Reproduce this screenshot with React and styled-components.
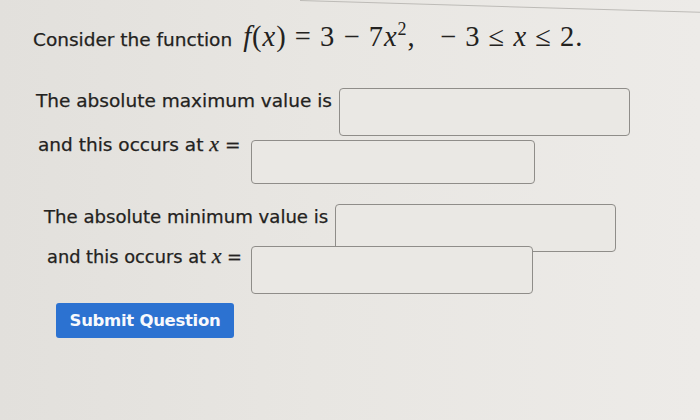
import React from "react";
import styled, { createGlobalStyle } from "styled-components";

const GlobalStyle = createGlobalStyle`
  body {
    margin: 0;
    background: #e7e5e1;
  }
`;

const Page = styled.div`
  width: 700px;
  height: 420px;
  overflow: hidden;
  background: linear-gradient(90deg, #e2e0dc 0%, #e8e6e2 45%, #edebe8 100%);
  font-family: "DejaVu Sans", "Noto Sans", sans-serif;
  color: #232220;
`;

const TopEdge = styled.div`
  margin-left: 300px;
  width: 420px;
  height: 2px;
  border-top: 1.5px solid #bdbbb7;
  transform: rotate(1.7deg);
  transform-origin: left top;
`;

const Title = styled.div`
  display: flex;
  align-items: baseline;
  padding: 16px 0 0 33px;
  font-size: 18.5px;
  white-space: nowrap;
  -webkit-text-stroke: 0.25px #232220;
`;

const Math = styled.span`
  font-family: "Liberation Serif", "DejaVu Serif", serif;
  font-size: 28.5px;
  margin-left: 11px;
  letter-spacing: 1px;
  -webkit-text-stroke: 0;
`;

const Var = styled.i`
  font-family: "Liberation Serif", "DejaVu Serif", serif;
  font-style: italic;
  font-size: ${(p) => p.size || "inherit"};
`;

const Sup = styled.sup`
  font-size: 18px;
`;

const Group = styled.div`
  margin-top: ${(p) => p.top}px;
  display: flex;
  flex-direction: column;
  gap: ${(p) => p.gap}px;
`;

const Row = styled.div`
  display: flex;
  align-items: flex-start;
  margin-top: ${(p) => p.shift || 0}px;
  padding-left: ${(p) => p.indent}px;
  font-size: ${(p) => p.size}px;
  white-space: nowrap;
  -webkit-text-stroke: 0.25px #232220;
`;

const Label = styled.span`
  margin-top: ${(p) => p.pad}px;
  margin-right: ${(p) => p.gap}px;
`;

const Field = styled.div`
  width: ${(p) => p.w}px;
  height: ${(p) => p.h}px;
  box-sizing: border-box;
  border: 1.5px solid #8f8d89;
  border-radius: 4px;
  background: #eae8e4;
`;

const Button = styled.button`
  margin: 9px 0 0 56px;
  width: 178px;
  height: 35px;
  border: none;
  border-radius: 3px;
  background: #2c72d1;
  color: #f7f9fc;
  font-family: "DejaVu Sans", sans-serif;
  font-weight: bold;
  font-size: 16.5px;
  letter-spacing: -0.3px;
  padding: 0;
`;

const Result = ({ kind, rows }) => {
  const [a, b] = rows;
  return (
    <Group top={0} gap={0}>
      <Row indent={a.indent} size={a.size}>
        <Label pad={2} gap={a.gap}>
          The absolute {kind} value is
        </Label>
        <Field w={a.w} h={48} />
      </Row>
      <Row indent={b.indent} size={b.size} shift={b.shift}>
        <Label pad={b.pad} gap={b.gap}>
          and this occurs at <Var size="22px">x</Var> =
        </Label>
        <Field w={b.w} h={b.h} />
      </Row>
    </Group>
  );
};

export default function App() {
  return (
    <Page>
      <GlobalStyle />
      <TopEdge />
      <Title>
        Consider the function
        <Math>
          <Var>f</Var>(<Var>x</Var>) = 3 − 7<Var>x</Var>
          <Sup>2</Sup>,&nbsp;&nbsp;&nbsp;− 3 ≤ <Var>x</Var> ≤ 2.
        </Math>
      </Title>
      <Group top={35} gap={20}>
        <Result
          kind="maximum"
          rows={[
            { indent: 36, size: 18.5, gap: 7, w: 291 },
            { indent: 38, size: 18.5, gap: 11, w: 284, pad: -9, h: 44, shift: 4 },
          ]}
        />
        <Result
          kind="minimum"
          rows={[
            { indent: 44, size: 18.1, gap: 7, w: 281 },
            { indent: 47, size: 17.8, gap: 9, w: 282, pad: -3, h: 48, shift: -6 },
          ]}
        />
      </Group>
      <Button>Submit Question</Button>
    </Page>
  );
}
